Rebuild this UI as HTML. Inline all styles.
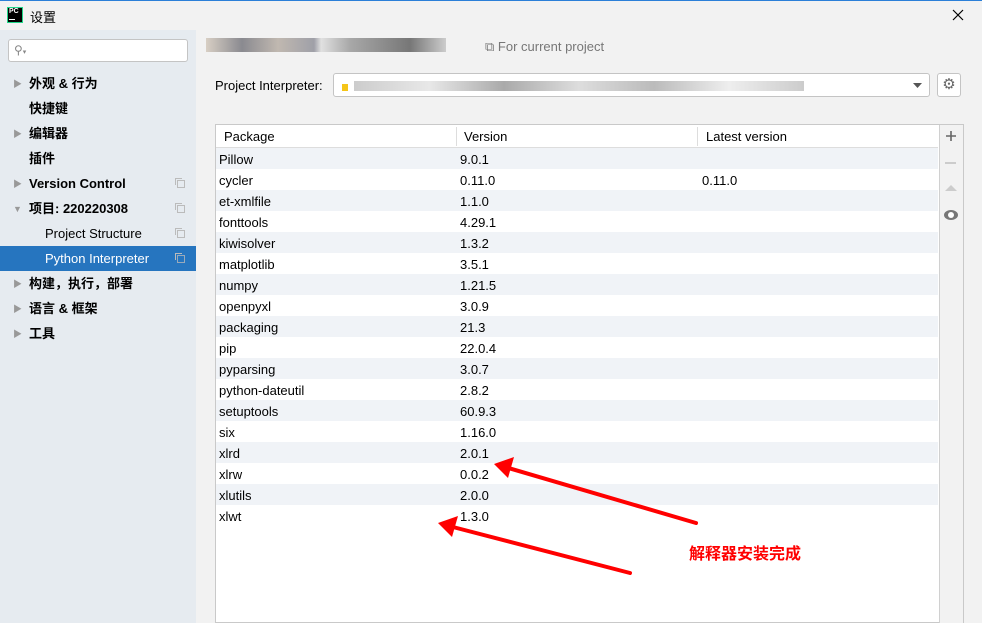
<!DOCTYPE html>
<html><head><meta charset="utf-8"><style>
*{margin:0;padding:0;box-sizing:border-box}
body{width:982px;height:623px;overflow:hidden;background:#f2f2f2;font-family:"Liberation Sans","Noto Sans CJK SC",sans-serif;font-size:13px;color:#000;position:relative}
.a{position:absolute}
.side{left:0;top:30px;width:196px;height:593px;background:#e6ebf0}
.item{position:absolute;left:0;width:196px;height:25px;line-height:26px;font-size:13px}
.item b{font-weight:bold}
.tri{position:absolute;left:13px;color:#999;font-size:9px}
.cp{position:absolute;left:177px;top:9px;width:8px;height:8px;border:1px solid #bbb}
.cp:before{content:"";position:absolute;left:-3px;top:-3px;width:6px;height:6px;border-left:1px solid #bbb;border-top:1px solid #bbb}
.row{position:absolute;left:216px;width:722px;height:21px;line-height:23px}
.row span{position:absolute}
</style></head><body>
<div class="a" style="left:0;top:0;width:982px;height:1px;background:#2b7fd8"></div>
<div class="a" style="left:7px;top:7px;width:16px;height:16px;background:#000;border:1px solid #21d789;color:#fff;font-size:7px;font-weight:bold;padding-left:1px;line-height:8px">PC<div style="width:6px;height:1px;background:#fff;margin-top:3px"></div></div>
<div class="a" style="left:30px;top:7px;font-size:13px">设置</div>
<svg class="a" style="left:952px;top:9px" width="12" height="12"><path d="M1 1L11 11M11 1L1 11" stroke="#000" stroke-width="1.2"/></svg>
<div class="a side">
<div class="a" style="left:8px;top:9px;width:180px;height:23px;background:#fff;border:1px solid #c4c4c4;border-radius:3px;color:#888;font-size:12px;padding-left:5px;line-height:20px">⚲<span style="font-size:7px">▾</span></div>
<div class="item" style="top:41px"><span class="tri">▶</span><b style="position:absolute;left:29px">外观 &amp; 行为</b></div>
<div class="item" style="top:66px"><b style="position:absolute;left:29px">快捷键</b></div>
<div class="item" style="top:91px"><span class="tri">▶</span><b style="position:absolute;left:29px">编辑器</b></div>
<div class="item" style="top:116px"><b style="position:absolute;left:29px">插件</b></div>
<div class="item" style="top:141px"><span class="tri">▶</span><b style="position:absolute;left:29px">Version Control</b><span class="cp"></span></div>
<div class="item" style="top:166px"><span class="tri">▼</span><b style="position:absolute;left:29px">项目: 220220308</b><span class="cp"></span></div>
<div class="item" style="top:191px"><span style="position:absolute;left:45px">Project Structure</span><span class="cp"></span></div>
<div class="item" style="top:216px;background:#2675bf;color:#fff"><span style="position:absolute;left:45px">Python Interpreter</span><span class="cp" style="border-color:#9ab"></span></div>
<div class="item" style="top:241px"><span class="tri">▶</span><b style="position:absolute;left:29px">构建，执行，部署</b></div>
<div class="item" style="top:266px"><span class="tri">▶</span><b style="position:absolute;left:29px">语言 &amp; 框架</b></div>
<div class="item" style="top:291px"><span class="tri">▶</span><b style="position:absolute;left:29px">工具</b></div>
</div>
<div class="a" style="left:206px;top:38px;width:240px;height:14px;background:linear-gradient(90deg,#d8cfc4,#8a8a90 15%,#c0b8b0 30%,#9fa0a8 45%,#e0e0e0 48%,#a8a8a8 60%,#777 85%,#ccc)"></div>
<div class="a" style="left:485px;top:39px;color:#777;font-size:13px">⧉ For current project</div>
<div class="a" style="left:215px;top:78px">Project Interpreter:</div>
<div class="a" style="left:333px;top:73px;width:597px;height:24px;background:#fff;border:1px solid #c4c4c4;border-radius:3px"><div class="a" style="left:8px;top:10px;width:6px;height:7px;background:#f5c518"></div><div class="a" style="left:20px;top:7px;width:450px;height:10px;background:linear-gradient(90deg,#ccc,#e8e8e8,#aaa,#ddd,#bbb,#eee,#ccc)"></div><svg class="a" style="left:579px;top:9px" width="9" height="6"><path d="M0 0H9L4.5 5Z" fill="#555"/></svg></div>
<div class="a" style="left:937px;top:73px;width:24px;height:24px;background:#fff;border:1px solid #c4c4c4;border-radius:3px;text-align:center;line-height:22px;color:#666;font-size:15px">⚙</div>
<div class="a" style="left:215px;top:124px;width:749px;height:499px;border:1px solid #c9c9c9;background:#fff"></div>
<div class="a" style="left:939px;top:125px;width:24px;height:498px;background:#f2f2f2;border-left:1px solid #d0d0d0"></div>
<svg class="a" style="left:945px;top:130px" width="12" height="12"><path d="M6 1V11M1 6H11" stroke="#666" stroke-width="1.6"/></svg>
<div class="a" style="left:945px;top:162px;width:11px;height:2px;background:#ccc"></div>
<div class="a" style="left:945px;top:185px;width:0;height:0;border:6px solid transparent;border-bottom:6px solid #ccc;border-top:0"></div>
<div class="a" style="left:944px;top:210px;width:14px;height:10px;border-radius:50%;background:#777"><div class="a" style="left:4px;top:2px;width:6px;height:6px;border-radius:50%;background:#fff"></div></div>
<div class="row" style="top:125px;height:23px;line-height:24px;border-bottom:1px solid #ddd"><span style="left:8px">Package</span><span style="left:240px;top:2px;height:19px;border-left:1px solid #ddd"></span><span style="left:248px">Version</span><span style="left:481px;top:2px;height:19px;border-left:1px solid #ddd"></span><span style="left:490px">Latest version</span></div>
<div class="row" style="top:148px;background:#f0f3f7"><span style="left:3px">Pillow</span><span style="left:244px">9.0.1</span></div>
<div class="row" style="top:169px"><span style="left:3px">cycler</span><span style="left:244px">0.11.0</span><span style="left:486px">0.11.0</span></div>
<div class="row" style="top:190px;background:#f0f3f7"><span style="left:3px">et-xmlfile</span><span style="left:244px">1.1.0</span></div>
<div class="row" style="top:211px"><span style="left:3px">fonttools</span><span style="left:244px">4.29.1</span></div>
<div class="row" style="top:232px;background:#f0f3f7"><span style="left:3px">kiwisolver</span><span style="left:244px">1.3.2</span></div>
<div class="row" style="top:253px"><span style="left:3px">matplotlib</span><span style="left:244px">3.5.1</span></div>
<div class="row" style="top:274px;background:#f0f3f7"><span style="left:3px">numpy</span><span style="left:244px">1.21.5</span></div>
<div class="row" style="top:295px"><span style="left:3px">openpyxl</span><span style="left:244px">3.0.9</span></div>
<div class="row" style="top:316px;background:#f0f3f7"><span style="left:3px">packaging</span><span style="left:244px">21.3</span></div>
<div class="row" style="top:337px"><span style="left:3px">pip</span><span style="left:244px">22.0.4</span></div>
<div class="row" style="top:358px;background:#f0f3f7"><span style="left:3px">pyparsing</span><span style="left:244px">3.0.7</span></div>
<div class="row" style="top:379px"><span style="left:3px">python-dateutil</span><span style="left:244px">2.8.2</span></div>
<div class="row" style="top:400px;background:#f0f3f7"><span style="left:3px">setuptools</span><span style="left:244px">60.9.3</span></div>
<div class="row" style="top:421px"><span style="left:3px">six</span><span style="left:244px">1.16.0</span></div>
<div class="row" style="top:442px;background:#f0f3f7"><span style="left:3px">xlrd</span><span style="left:244px">2.0.1</span></div>
<div class="row" style="top:463px"><span style="left:3px">xlrw</span><span style="left:244px">0.0.2</span></div>
<div class="row" style="top:484px;background:#f0f3f7"><span style="left:3px">xlutils</span><span style="left:244px">2.0.0</span></div>
<div class="row" style="top:505px"><span style="left:3px">xlwt</span><span style="left:244px">1.3.0</span></div>
<svg class="a" style="left:0;top:0" width="982" height="623">
<g stroke="#f00" stroke-width="4" stroke-linecap="round" fill="#f00">
<line x1="696" y1="523" x2="505" y2="467"/><line x1="630" y1="573" x2="449" y2="526"/>
</g>
<polygon points="494,464 514,457 508,478" fill="#f00"/>
<polygon points="438,523 458,516 452,537" fill="#f00"/>
</svg>
<div class="a" style="left:689px;top:540px;color:#f00;font-weight:bold;font-size:16px">解释器安装完成</div>
</body></html>
